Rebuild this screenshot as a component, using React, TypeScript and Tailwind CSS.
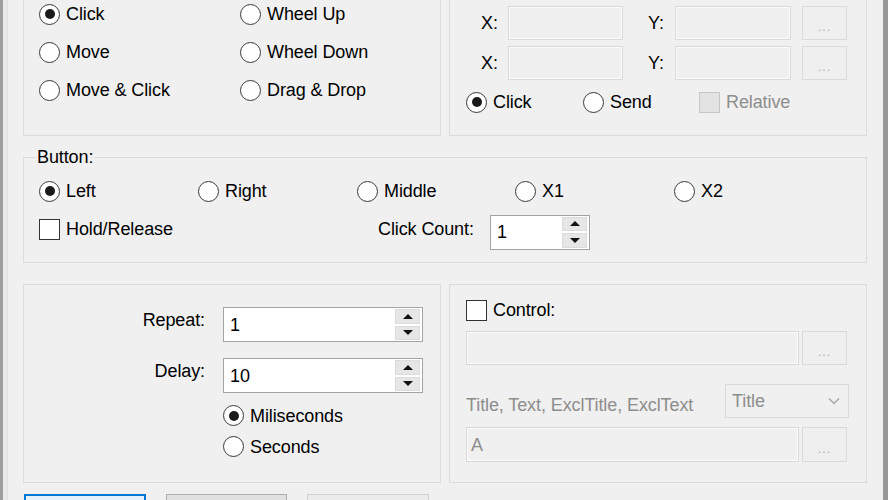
import type { ReactNode } from "react";

function Group({ label, className = "", children }: { label?: string; className?: string; children: ReactNode }) {
  return (
    <div className={`relative border border-[#dcdcdc] ${className}`}>
      {label && (
        <span className="absolute -top-[11px] left-[12px] bg-[#f0f0f0] px-[1px] leading-[20px]">{label}</span>
      )}
      {children}
    </div>
  );
}

function Radio({ label, checked = false, className = "" }: { label: string; checked?: boolean; className?: string }) {
  return (
    <div className={`flex items-center gap-[6px] ${className}`}>
      <span className="flex h-[21px] w-[21px] shrink-0 items-center justify-center rounded-full border-[1.5px] border-[#3a3a3a] bg-white">
        {checked && <span className="h-[10px] w-[10px] rounded-full bg-[#1a1a1a]" />}
      </span>
      <span className="whitespace-nowrap">{label}</span>
    </div>
  );
}

function Checkbox({ label, disabled = false }: { label: string; disabled?: boolean }) {
  return (
    <div className="flex items-center gap-[6px]">
      <span
        className={
          disabled
            ? "h-[21px] w-[21px] shrink-0 border border-[#c6c6c6] bg-[#e3e3e3]"
            : "h-[21px] w-[21px] shrink-0 border border-[#333333] bg-white"
        }
      />
      <span className={disabled ? "whitespace-nowrap text-[#8d8d8d]" : "whitespace-nowrap"}>{label}</span>
    </div>
  );
}

function TextBox({ className = "", value }: { className?: string; value?: string }) {
  return (
    <div
      className={`flex items-center border border-[#d9d9d9] bg-[#f0f0f0] pl-[4px] text-[#8d8d8d] shadow-[inset_0_0_0_1px_#fbfbfb] ${className}`}
    >
      {value}
    </div>
  );
}

function DotsButton({ className = "" }: { className?: string }) {
  return (
    <div
      className={`flex w-[45px] shrink-0 items-center justify-center border border-[#dadada] bg-[#efefef] pt-[8px] text-[12px] tracking-[1px] text-[#a6a6a6] ${className}`}
    >
      ...
    </div>
  );
}

function Spin({ value, className = "" }: { value: string; className?: string }) {
  return (
    <div className={`flex items-stretch border border-[#a3a3a3] bg-white ${className}`}>
      <span className="flex flex-1 items-center pl-[6px]">{value}</span>
      <div className="mr-[2px] flex w-[25px] flex-col gap-[2px] py-[1px]">
        <div className="flex flex-1 items-center justify-center border border-[#dcdcdc] bg-[#e6e6e6]">
          <span className="h-0 w-0 border-x-[5px] border-b-[5px] border-x-transparent border-b-[#111111]" />
        </div>
        <div className="flex flex-1 items-center justify-center border border-[#dcdcdc] bg-[#e6e6e6]">
          <span className="h-0 w-0 border-x-[5px] border-t-[5px] border-x-transparent border-t-[#111111]" />
        </div>
      </div>
    </div>
  );
}

export default function App() {
  return (
    <div className="flex h-[500px] w-[888px] overflow-hidden bg-[#f0f0f0] font-['Liberation_Sans',Arial,sans-serif] text-[18px] leading-[20px] tracking-[-0.1px] text-black">
      <div className="w-[3px] shrink-0 bg-[#9d9d9d]" />
      <div className="w-[5px] shrink-0 border-r border-[#dedede] bg-[#e9e9e9]" />

      <div className="flex flex-1 flex-col pl-[15px] pr-[16px]">
        {/* action + coordinates */}
        <div className="-mt-[20px] grid h-[156px] shrink-0 grid-cols-[418px_1fr] gap-x-[8px]">
          <Group className="pl-[15px] pt-[14px]">
            <div className="grid grid-cols-[201px_1fr]">
              <div className="flex h-[38px] items-center"><Radio label="Click" checked /></div>
              <div className="flex h-[38px] items-center"><Radio label="Wheel Up" /></div>
              <div className="flex h-[38px] items-center"><Radio label="Move" /></div>
              <div className="flex h-[38px] items-center"><Radio label="Wheel Down" /></div>
              <div className="flex h-[38px] items-center"><Radio label="Move & Click" /></div>
              <div className="flex h-[38px] items-center"><Radio label="Drag & Drop" /></div>
            </div>
          </Group>

          <Group className="pt-[25px]">
            {[0, 1].map((i) => (
              <div key={i} className={`flex h-[34px] items-center pl-[31px] ${i === 1 ? "mt-[6px]" : ""}`}>
                <span className="w-[17px]">X:</span>
                <TextBox className="ml-[10px] h-full w-[115px]" />
                <span className="ml-[25px] w-[17px]">Y:</span>
                <TextBox className="ml-[10px] h-full w-[116px]" />
                <DotsButton className="ml-[11px] h-full" />
              </div>
            ))}
            <div className="mt-[8px] flex h-[28px] items-center pl-[16px]">
              <Radio label="Click" checked className="w-[117px]" />
              <Radio label="Send" className="w-[116px]" />
              <Checkbox label="Relative" disabled />
            </div>
          </Group>
        </div>

        {/* mouse button */}
        <Group label="Button:" className="mt-[21px] h-[106px] shrink-0 pl-[15px] pt-[14px]">
          <div className="grid h-[38px] grid-cols-[159px_159px_158px_159px_1fr] items-center">
            <Radio label="Left" checked />
            <Radio label="Right" />
            <Radio label="Middle" />
            <Radio label="X1" />
            <Radio label="X2" />
          </div>
          <div className="flex h-[38px] items-center">
            <div className="w-[339px]"><Checkbox label="Hold/Release" /></div>
            <span className="w-[112px] whitespace-nowrap">Click Count:</span>
            <Spin value="1" className="mt-[6px] h-[35px] w-[100px]" />
          </div>
        </Group>

        {/* repeat + control */}
        <div className="mt-[21px] grid h-[199px] shrink-0 grid-cols-[418px_1fr] gap-x-[8px]">
          <Group className="pt-[22px]">
            <div className="flex h-[35px]">
              <span className="w-[181px] pt-[3px] text-right">Repeat:</span>
              <Spin value="1" className="ml-[18px] w-[200px]" />
            </div>
            <div className="mt-[16px] flex h-[35px]">
              <span className="w-[181px] pt-[3px] text-right">Delay:</span>
              <Spin value="10" className="ml-[18px] w-[200px]" />
            </div>
            <div className="mt-[7px] pl-[199px]">
              <div className="flex h-[31px] items-center"><Radio label="Miliseconds" checked /></div>
              <div className="flex h-[31px] items-center"><Radio label="Seconds" /></div>
            </div>
          </Group>

          <Group className="pl-[16px] pt-[11px]">
            <div className="flex h-[28px] items-center"><Checkbox label="Control:" /></div>
            <div className="mt-[7px] flex h-[34px]">
              <TextBox className="w-[333px]" />
              <DotsButton className="ml-[3px]" />
            </div>
            <div className="mt-[19px] flex h-[34px] items-center">
              <span className="mt-[8px] w-[259px] whitespace-nowrap text-[#8d8d8d]">Title, Text, ExclTitle, ExclText</span>
              <div className="flex h-full w-[124px] items-center justify-between border border-[#d9d9d9] bg-[#f0f0f0] pl-[6px] pr-[8px] text-[#8d8d8d]">
                <span>Title</span>
                <svg width="12" height="8" viewBox="0 0 12 8">
                  <polyline points="1,1.5 6,6.5 11,1.5" fill="none" stroke="#a8a8a8" strokeWidth="1.5" />
                </svg>
              </div>
            </div>
            <div className="mt-[9px] flex h-[35px]">
              <TextBox className="w-[333px]" value="A" />
              <DotsButton className="ml-[3px]" />
            </div>
          </Group>
        </div>

        {/* dialog buttons */}
        <div className="mt-[11px] flex shrink-0 gap-[20px] pl-[1px]">
          <button className="h-[34px] w-[122px] border-2 border-[#0078d7] bg-[#e5f1fb]" />
          <button className="h-[34px] w-[121px] border border-[#adadad] bg-[#e1e1e1]" />
          <button className="h-[34px] w-[122px] border border-[#cfcfcf] bg-[#ececec]" />
        </div>
      </div>

      <div className="w-[5px] shrink-0 bg-[#979797]" />
    </div>
  );
}
